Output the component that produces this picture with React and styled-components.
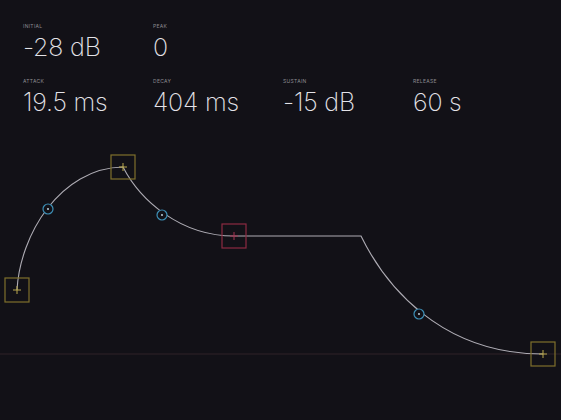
import React from 'react'
import styled, { createGlobalStyle } from 'styled-components'

const GlobalStyle = createGlobalStyle`
    html, body {
        margin: 0;
        padding: 0;
        background: #121117;
    }
    body {
        font-family: Inter, Roboto, "Liberation Sans", sans-serif;
        overflow: hidden;
    }
`;

const Page = styled.div`
    width: 561px;
    height: 420px;
    background: #121117;
    display: flex;
    flex-direction: column;
`;

const Readouts = styled.div`
    display: grid;
    grid-template-columns: repeat(4, 130px);
    grid-auto-rows: 42px;
    row-gap: 13px;
    padding: 23px 0 0 23px;
    box-sizing: border-box;
    height: 130px;
`;

const Readout = styled.div`
    display: flex;
    flex-direction: column;
    grid-column: ${p => p.col};
`;

const Label = styled.span`
    font-size: 5px;
    line-height: 6px;
    letter-spacing: 0.3px;
    text-transform: uppercase;
    color: #8c8b91;
`;

const Value = styled.span`
    font-size: 25px;
    font-weight: 200;
    line-height: 30px;
    letter-spacing: -0.2px;
    color: #e4e3e8;
    margin-top: 3px;
`;

const Chart = styled.svg`
    display: block;
    width: 561px;
    height: 290px;
`;

const readouts = [
    { label: 'Initial', value: '-28 dB', col: 1 },
    { label: 'Peak', value: '0', col: 2 },
    { label: 'Attack', value: '19.5 ms', col: 1 },
    { label: 'Decay', value: '404 ms', col: 2 },
    { label: 'Sustain', value: '-15 dB', col: 3 },
    { label: 'Release', value: '60 s', col: 4 },
]

const YELLOW = '#7f712c'
const RED = '#8c2b42'
const BLUE = '#3d8fb6'

function Handle({ x, y, color, plus }) {
    return (
        <g>
            <rect x={x - 12} y={y - 12} width={24} height={24} fill="none" stroke={color} strokeWidth={1.2} />
            <path d={`M${x - 4} ${y}H${x + 4}M${x} ${y - 4}V${y + 4}`} stroke={plus} strokeWidth={1} />
        </g>
    )
}

function Knob({ x, y }) {
    return (
        <g>
            <circle cx={x} cy={y} r={5} fill="#121117" stroke={BLUE} strokeWidth={1.2} />
            <circle cx={x} cy={y} r={0.9} fill="#cfe6f2" />
        </g>
    )
}

function Envelope() {
    const d = [
        'M17 290',
        'C20 235 60 168 123 167',
        'C140 200 180 236 234 236',
        'L361 236',
        'C385 285 440 354 543 354',
    ].join(' ')

    return (
        <Chart viewBox="0 130 561 290">
            <line x1={0} y1={354} x2={561} y2={354} stroke="#261c23" strokeWidth={1.5} />
            <path d={d} fill="none" stroke="#aeacb4" strokeWidth={1.1} />
            <Knob x={48} y={209} />
            <Knob x={162} y={215} />
            <Knob x={419} y={314} />
            <Handle x={17} y={290} color={YELLOW} plus="#b9a84e" />
            <Handle x={123} y={167} color={YELLOW} plus="#b9a84e" />
            <Handle x={234} y={236} color={RED} plus="#a33250" />
            <Handle x={543} y={354} color={YELLOW} plus="#b9a84e" />
        </Chart>
    )
}

export default function App() {
    return (
        <Page>
            <GlobalStyle />
            <Readouts>
                {readouts.map(r => (
                    <Readout key={r.label} col={r.col}>
                        <Label>{r.label}</Label>
                        <Value>{r.value}</Value>
                    </Readout>
                ))}
            </Readouts>
            <Envelope />
        </Page>
    )
}
